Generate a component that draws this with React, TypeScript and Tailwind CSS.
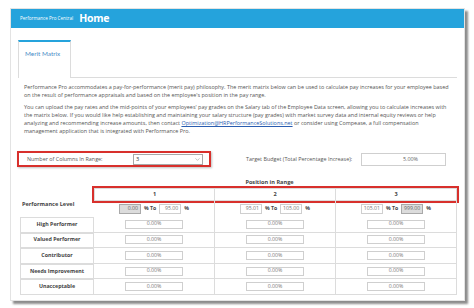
import { ChevronDown } from "lucide-react";

const rows = ["High Performer", "Valued Performer", "Contributor", "Needs Improvement", "Unacceptable"];

const ranges = [
    { from: "0.00", to: "95.00", fromLocked: true, toLocked: false },
    { from: "95.01", to: "105.00", fromLocked: false, toLocked: false },
    { from: "105.01", to: "999.00", fromLocked: false, toLocked: true },
];

const RangeBox = ({ value, locked }: { value: string; locked: boolean }) => (
    <div
        className={
            locked
                ? "w-[22px] h-[10px] border border-[#a9a9a9] bg-[#dcdcdc] flex items-center justify-end pr-[2px] text-[5.2px] text-[#666]"
                : "w-[22px] h-[10px] border border-[#cfcfcf] bg-white flex items-center justify-end pr-[2px] text-[5.2px] text-[#777]"
        }
    >
        {value}
    </div>
);

const App = () => {
    return (
        <div className="w-[474px] h-[308px] bg-white overflow-hidden pt-[8px] pl-[10px] font-['Open_Sans',sans-serif] text-[#555]">
            <div className="w-[455px] h-[293px] border border-[#e3e3e3] bg-white shadow-[3px_3px_2px_rgba(0,0,0,0.45)] flex flex-col">
                {/* header */}
                <div className="h-[19px] bg-[#25a3dc] flex items-center pl-[9px] text-white shrink-0">
                    <span className="text-[4.6px] leading-none">Performance Pro Central</span>
                    <span className="ml-[6px] text-[10.5px] font-bold leading-none tracking-[-0.2px]">Home</span>
                </div>

                {/* tabs */}
                <div className="mt-[12px] mx-[7px] flex border-b border-[#dcdcdc] shrink-0">
                    <div className="w-[53px] h-[38px] -mb-px border-t-2 border-t-[#25a3dc] border-x border-x-[#dcdcdc] bg-white pl-[6px] pt-[8px] text-[6.4px] leading-[8px] text-[#4a8cc6] font-['Lato',sans-serif]">
                        Merit Matrix
                    </div>
                </div>

                {/* text */}
                <div className="pl-[13px] mt-[5px] text-[5.45px] leading-[8px] text-[#555] whitespace-nowrap">
                    <p>Performance Pro accommodates a pay-for-performance (merit pay) philosophy. The merit matrix below can be used to calculate pay increases for your employee based</p>
                    <p>on the result of performance appraisals and based on the employee's position in the pay range.</p>
                    <div className="mt-[4px]">
                        <p>You can upload the pay rates and the mid-points of your employees' pay grades on the Salary tab of the Employee Data screen, allowing you to calculate increases with</p>
                        <p>the matrix below. If you would like help establishing and maintaining your salary structure (pay grades) with market survey data and internal equity reviews or help</p>
                        <p>
                            analyzing and recommending increase amounts, then contact{" "}
                            <span className="text-[#2a5db0] underline">Optimization@HRPerformanceSolutions.net</span> or consider using Compease, a full compensation
                        </p>
                        <p>management application that is integrated with Performance Pro.</p>
                    </div>
                </div>

                {/* controls */}
                <div className="mt-[16px] flex items-center h-[16px] pl-[6px]">
                    <div className="w-[194px] h-[16px] border-2 border-[#d8302c] flex items-center pl-[8px] shadow-[1px_1px_2px_rgba(0,0,0,0.25)]">
                        <span className="w-[106px] text-[5.4px]">Number of Columns In Range:</span>
                        <div className="w-[70px] h-[11px] border border-[#a8a8a8] flex items-center justify-between pl-[2px] pr-[1px] text-[5.6px] text-[#333]">
                            <span>3</span>
                            <ChevronDown size={7} strokeWidth={1.5} className="text-[#777]" />
                        </div>
                    </div>
                    <span className="ml-[35px] w-[115px] text-[5.4px]">Target Budget (Total Percentage Increase):</span>
                    <div className="w-[85px] h-[13px] border border-[#cfcfcf] flex items-center justify-center pl-[14px] text-[5.4px] text-[#666]">
                        5.00%
                    </div>
                </div>

                {/* matrix */}
                <div className="mt-[11px] pl-[9px]">
                    <div className="ml-[74px] w-[363px] pr-[12px] text-center text-[5.6px] leading-[8px] font-bold text-[#444]">Position in Range</div>
                    <div className="mt-[2px] grid grid-cols-[74px_121px_121px_121px] w-[437px]">
                        <div className="row-span-2 flex items-center pl-[2px] pt-[4px] text-[5.6px] font-bold text-[#444]">Performance Level</div>
                        <div className="col-span-3 grid grid-cols-[121px_121px_121px] h-[13px] ring-2 ring-[#d8302c] shadow-[1px_1px_2px_rgba(0,0,0,0.25)]">
                            {["1", "2", "3"].map((c) => (
                                <div key={c} className="border border-[#dcdcdc] -ml-px first:ml-0 flex items-center justify-center text-[5.6px] font-bold text-[#444]">
                                    {c}
                                </div>
                            ))}
                        </div>
                        {ranges.map((r, i) => (
                            <div key={i} className="h-[16px] border-r border-[#dcdcdc] flex items-center justify-center gap-[3px] text-[5.2px]">
                                <RangeBox value={r.from} locked={r.fromLocked} />
                                <span className="font-bold text-[#444]">% To</span>
                                <RangeBox value={r.to} locked={r.toLocked} />
                                <span className="font-bold text-[#444]">%</span>
                            </div>
                        ))}
                        {rows.map((label) => (
                            <div key={label} className="contents">
                                <div className="h-[15.6px] border-b border-x border-[#dcdcdc] first:border-t flex items-center justify-center text-[5.3px] font-bold text-[#444]">
                                    {label}
                                </div>
                                {[0, 1, 2].map((c) => (
                                    <div key={c} className="h-[15.6px] border-b border-r border-[#dcdcdc] flex items-center justify-center">
                                        <div className="w-[58px] h-[9px] border border-[#cfcfcf] flex items-center justify-center text-[5.2px] text-[#777]">
                                            0.00%
                                        </div>
                                    </div>
                                ))}
                            </div>
                        ))}
                    </div>
                </div>
            </div>
        </div>
    );
};

export default App;
